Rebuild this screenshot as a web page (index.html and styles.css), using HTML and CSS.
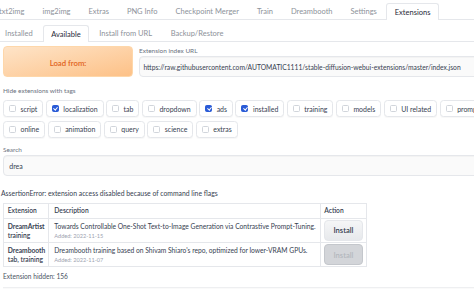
FILE: index.html
```html
<!DOCTYPE html>
<html>
<head>
<meta charset="utf-8">
<link rel="stylesheet" href="styles.css">
</head>
<body>
<div class="page">
  <nav class="tabs top-tabs">
    <button class="tab">txt2img</button>
    <button class="tab">img2img</button>
    <button class="tab">Extras</button>
    <button class="tab">PNG Info</button>
    <button class="tab">Checkpoint Merger</button>
    <button class="tab">Train</button>
    <button class="tab">Dreambooth</button>
    <button class="tab">Settings</button>
    <button class="tab selected">Extensions</button>
  </nav>
  <nav class="tabs sub-tabs">
    <button class="tab">Installed</button>
    <button class="tab selected">Available</button>
    <button class="tab">Install from URL</button>
    <button class="tab">Backup/Restore</button>
  </nav>

  <div class="load-row">
    <button class="btn-primary">Load from:</button>
    <label class="field url-field">
      <span class="field-label">Extension index URL</span>
      <input class="textbox url" value="https://raw.githubusercontent.com/AUTOMATIC1111/stable-diffusion-webui-extensions/master/index.json">
    </label>
  </div>

  <div class="tags">
    <span class="field-label">Hide extensions with tags</span>
    <div class="tag-list">
      <label class="tag"><span class="check"></span>script</label>
      <label class="tag"><span class="check on"></span>localization</label>
      <label class="tag"><span class="check"></span>tab</label>
      <label class="tag"><span class="check"></span>dropdown</label>
      <label class="tag"><span class="check on"></span>ads</label>
      <label class="tag"><span class="check on"></span>installed</label>
      <label class="tag"><span class="check"></span>training</label>
      <label class="tag"><span class="check"></span>models</label>
      <label class="tag"><span class="check"></span>UI related</label>
      <label class="tag"><span class="check"></span>prompting</label>
      <label class="tag"><span class="check"></span>online</label>
      <label class="tag"><span class="check"></span>animation</label>
      <label class="tag"><span class="check"></span>query</label>
      <label class="tag"><span class="check"></span>science</label>
      <label class="tag"><span class="check"></span>extras</label>
    </div>
  </div>

  <label class="field search-field">
    <span class="field-label">Search</span>
    <input class="textbox wide" value="drea">
  </label>

  <p class="error">AssertionError: extension access disabled because of command line flags</p>

  <table class="ext-table">
    <colgroup>
      <col class="w1"><col class="w2"><col class="w3">
    </colgroup>
    <thead>
      <tr><th class="c1">Extension</th><th class="c2">Description</th><th class="c3">Action</th></tr>
    </thead>
    <tbody>
      <tr>
        <td class="c1"><b>DreamArtist</b><br><span class="tags-line">training</span></td>
        <td class="c2">Towards Controllable One-Shot Text-to-Image Generation via Contrastive Prompt-Tuning.<br><span class="added">Added: 2022-11-15</span></td>
        <td class="c3"><button class="btn-install">Install</button></td>
      </tr>
      <tr>
        <td class="c1"><b>Dreambooth</b><br><span class="tags-line">tab, training</span></td>
        <td class="c2">Dreambooth training based on Shivam Shiaro's repo, optimized for lower-VRAM GPUs.<br><span class="added">Added: 2022-11-07</span></td>
        <td class="c3"><button class="btn-install" disabled>Install</button></td>
      </tr>
    </tbody>
  </table>

  <p class="hidden-count">Extension hidden: 156</p>
  <div class="next-box"></div>
</div>
</body>
</html>
```
FILE: styles.css
```css
html, body {
  margin: 0;
  padding: 0;
  overflow: hidden;
  background: #fff;
}
body {
  width: 474px;
  height: 289px;
  font-family: Lato, "Liberation Sans", sans-serif;
  font-size: 7px;
  line-height: 10px;
  color: #374151;
}
.page {
  width: 520px;
  padding-left: 3px;
}
.tabs {
  display: flex;
  border-bottom: 1px solid #e5e7eb;
}
.top-tabs {
  margin-left: -12.5px;
  padding-top: 3px;
  gap: 0.8px;
}
.sub-tabs {
  margin-left: -6.5px;
  margin-top: 5px;
  gap: 1.3px;
}
.tab {
  font-family: inherit;
  font-size: 7.5px;
  color: #8d929a;
  background: none;
  border: 1px solid transparent;
  border-bottom: none;
  border-radius: 3px 3px 0 0;
  padding: 0 7.6px;
  height: 16px;
  line-height: 15px;
  margin-bottom: -1px;
  white-space: nowrap;
}
.tab.selected {
  background: #fff;
  border-color: #e5e7eb;
  color: #1f2937;
  height: 17px;
}
.load-row {
  display: flex;
  gap: 6px;
  margin-top: 4px;
}
.btn-primary {
  width: 130px;
  height: 31px;
  flex: none;
  padding: 2px 0 0;
  font-family: inherit;
  font-size: 7.75px;
  font-weight: 600;
  color: #e0621c;
  border: 1px solid #fed7aa;
  border-radius: 4px;
  background: linear-gradient(to bottom right, #fee4c8, #fdc187);
}
.field {
  display: flex;
  flex-direction: column;
}
.url-field {
  flex: 1;
}
.field-label {
  display: block;
  font-size: 6.45px;
  line-height: 10px;
  color: #6b7280;
}
.textbox {
  box-sizing: border-box;
  height: 21px;
  font-family: inherit;
  font-size: 6.73px;
  color: #374151;
  background: #fafafa;
  border: 1px solid #e5e7eb;
  border-radius: 4px;
  padding: 0 3.4px;
  outline: none;
  box-shadow: inset 0 1px 1px rgba(0,0,0,0.03);
}
.tags {
  margin-top: 9.3px;
}
.tag-list {
  display: flex;
  flex-wrap: wrap;
  gap: 3.3px 2.5px;
  margin-top: 4px;
}
.tag {
  box-sizing: border-box;
  height: 17px;
  display: flex;
  align-items: center;
  padding: 0 5px;
  border: 1px solid #e5e7eb;
  border-radius: 3.5px;
  font-size: 6.95px;
  color: #374151;
  background: #fff;
  box-shadow: 0 1px 1px rgba(0,0,0,0.03);
  white-space: nowrap;
}
.check {
  width: 7px;
  height: 7px;
  flex: none;
  box-sizing: border-box;
  border: 1px solid #d1d5db;
  border-radius: 1.5px;
  margin-right: 4.5px;
  background: #fff;
  position: relative;
}
.check.on {
  background: #2a5bd7;
  border-color: #2a5bd7;
}
.check.on::after {
  content: "";
  position: absolute;
  left: 1.6px;
  top: 0.2px;
  width: 1.5px;
  height: 3.2px;
  border: solid #fff;
  border-width: 0 1px 1px 0;
  transform: rotate(40deg);
}
.search-field {
  margin-top: 7.6px;
}
.textbox.wide {
  width: 100%;
  font-size: 7px;
  padding-left: 5.3px;
}
.error {
  margin: 12.3px 0 0 -2px;
  font-size: 6.83px;
  line-height: 10px;
  color: #374151;
}
.ext-table {
  margin-top: 5px;
  margin-left: -0.3px;
  width: 363px;
  table-layout: fixed;
  border-collapse: collapse;
  font-size: 6.7px;
  color: #374151;
}
.w1 { width: 45.6px; }
.w2 { width: 271.4px; }
.w3 { width: 46px; }
.ext-table th, .ext-table td {
  border: 1px solid #e5e7eb;
  text-align: left;
  vertical-align: top;
  padding: 2.8px 3px 1.2px 4px;
  line-height: 9.3px;
  white-space: nowrap;
}
.ext-table th {
  font-weight: 600;
  padding-top: 2px;
  padding-bottom: 2px;
}
.ext-table .c2 { padding-left: 5px; }
.ext-table .c3 { padding: 1.4px 3px 1.4px 3.5px; vertical-align: middle; }
.ext-table th.c3 { padding-top: 2px; padding-bottom: 2px; }
.ext-table td b { font-weight: 700; }
.tags-line { font-weight: 600; }
.added {
  font-size: 5.6px;
  color: #9ca3af;
}
.btn-install {
  display: block;
  width: 38.5px;
  height: 20.4px;
  padding: 0;
  font-family: inherit;
  font-size: 7.6px;
  font-weight: 600;
  color: #374151;
  border: 1px solid #e5e7eb;
  border-radius: 4px;
  background: linear-gradient(to bottom, #f5f6f7, #e7e9ec);
}
.btn-install:disabled {
  color: #b4b8be;
  border-color: #c4c7cc;
  background: #d3d5d9;
}
.hidden-count {
  margin: 4.3px 0 0 0;
  font-size: 6.62px;
  line-height: 10px;
  color: #4b5563;
}
.next-box {
  margin-top: 6px;
  height: 20px;
  border-top: 1px solid #eeeff1;
  background: #fafafa;
}
```
